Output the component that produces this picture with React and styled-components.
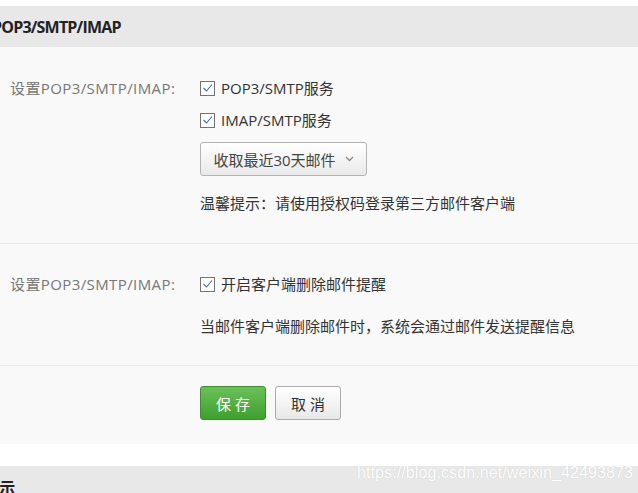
import React from "react";
import styled, { createGlobalStyle } from "styled-components";

const GlobalStyles = createGlobalStyle`
  html, body {
    margin: 0;
    padding: 0;
    background: #ffffff;
    overflow: hidden;
  }
  body {
    font-family: "Open Sans", "Noto Sans CJK SC", "Liberation Sans", sans-serif;
    font-size: 15px;
    color: #333333;
  }
`;

const Page = styled.div`
  width: 638px;
  height: 493px;
  padding-top: 6px;
  box-sizing: border-box;
  position: relative;
  overflow: hidden;
`;

const Header = styled.div`
  height: 41px;
  background: #e8e8e8;
  display: flex;
  align-items: ${props => (props.bottom ? "flex-start" : "center")};
  margin-top: ${props => (props.bottom ? 22 : 0)}px;
  padding-top: ${props => (props.bottom ? 12 : 0)}px;
  box-sizing: border-box;
`;

const HeaderTitle = styled.h2`
  margin: 0 0 0 ${props => props.shift || 0}px;
  font-size: 16px;
  font-weight: bold;
  color: #222222;
  line-height: 20px;
  letter-spacing: -0.8px;
`;

const Panel = styled.div`
  background: #f9f9f9;
  height: 397px;
`;

const Section = styled.div`
  display: grid;
  grid-template-columns: 200px 1fr;
  padding: ${props => props.padding || "0"};
  border-bottom: ${props => (props.last ? "none" : "1px solid #ebebeb")};
  box-sizing: border-box;
  height: ${props => props.height}px;
`;

const Label = styled.div`
  padding-left: 10px;
  color: #777777;
  font-size: 15px;
  letter-spacing: 0.4px;
  line-height: 20px;
`;

const Controls = styled.div`
  display: flex;
  flex-direction: column;
  align-items: flex-start;
`;

const CheckRow = styled.label`
  display: flex;
  align-items: center;
  gap: 6px;
  height: 20px;
  line-height: 20px;
  margin-bottom: ${props => props.gap || 0}px;
  color: #333333;
`;

const Box = styled.span`
  width: 15px;
  height: 15px;
  box-sizing: border-box;
  border: 1px solid #737373;
  background: #ffffff;
  display: flex;
  align-items: center;
  justify-content: center;
`;

const SelectButton = styled.button`
  width: 167px;
  height: 34px;
  margin-top: ${props => props.top || 0}px;
  display: flex;
  align-items: center;
  justify-content: center;
  gap: 9px;
  border: 1px solid #b3b3b3;
  border-radius: 3px;
  background: linear-gradient(#ffffff, #e9e9e9);
  color: #444444;
  font-family: inherit;
  font-size: 15px;
  padding: 0;
`;

const Hint = styled.p`
  margin: ${props => props.top || 0}px 0 0;
  line-height: 20px;
  color: #333333;
`;

const Actions = styled.div`
  grid-column: 2;
  display: flex;
  gap: 9px;
`;

const Button = styled.button`
  width: ${props => props.width}px;
  height: 34px;
  border-radius: 3px;
  padding: 0;
  font-family: inherit;
  font-size: 15px;
  letter-spacing: 4px;
  text-indent: 4px;
  border: 1px solid ${props => (props.primary ? "#3b8f2c" : "#ababab")};
  background: ${props =>
    props.primary
      ? "linear-gradient(#6cc05a, #3f9f2e)"
      : "linear-gradient(#ffffff, #e8e8e8)"};
  color: ${props => (props.primary ? "#ffffff" : "#333333")};
`;

const Watermark = styled.span`
  position: absolute;
  left: 357px;
  top: 464px;
  font-family: "Liberation Sans", sans-serif;
  font-size: 16px;
  letter-spacing: 0.1px;
  color: #ffffff;
  text-shadow: 0 0 1px #c4c4c4;
`;

const CheckIcon = () => (
  <svg width="11" height="10" viewBox="0 0 11 10">
    <path d="M1.5 5 L4.5 8 L10 1.5" fill="none" stroke="#4a6b95" strokeWidth="1.1" />
  </svg>
);

const Check = ({ children, gap }) => (
  <CheckRow gap={gap}>
    <Box>
      <CheckIcon />
    </Box>
    {children}
  </CheckRow>
);

const Chevron = () => (
  <svg width="9" height="6" viewBox="0 0 9 6">
    <path d="M1 1 L4.5 4.5 L8 1" fill="none" stroke="#888888" strokeWidth="1.3" />
  </svg>
);

export default function App() {
  return (
    <Page>
      <GlobalStyles />
      <Header>
        <HeaderTitle shift={-8}>POP3/SMTP/IMAP</HeaderTitle>
      </Header>
      <Panel>
        <Section padding="31px 0 0" height={197}>
          <Label>设置POP3/SMTP/IMAP:</Label>
          <Controls>
            <Check gap={12}>POP3/SMTP服务</Check>
            <Check>IMAP/SMTP服务</Check>
            <SelectButton top={12}>
              收取最近30天邮件
              <Chevron />
            </SelectButton>
            <Hint top={17}>温馨提示：请使用授权码登录第三方邮件客户端</Hint>
          </Controls>
        </Section>
        <Section padding="30px 0 0" height={122}>
          <Label>设置POP3/SMTP/IMAP:</Label>
          <Controls>
            <Check>开启客户端删除邮件提醒</Check>
            <Hint top={22}>当邮件客户端删除邮件时，系统会通过邮件发送提醒信息</Hint>
          </Controls>
        </Section>
        <Section padding="20px 0 0" height={78} last>
          <Actions>
            <Button primary width={66}>保存</Button>
            <Button width={66}>取消</Button>
          </Actions>
        </Section>
      </Panel>
      <Header bottom>
        <HeaderTitle shift={-16}>提示</HeaderTitle>
      </Header>
      <Watermark>https://blog.csdn.net/weixin_42493873</Watermark>
    </Page>
  );
}
